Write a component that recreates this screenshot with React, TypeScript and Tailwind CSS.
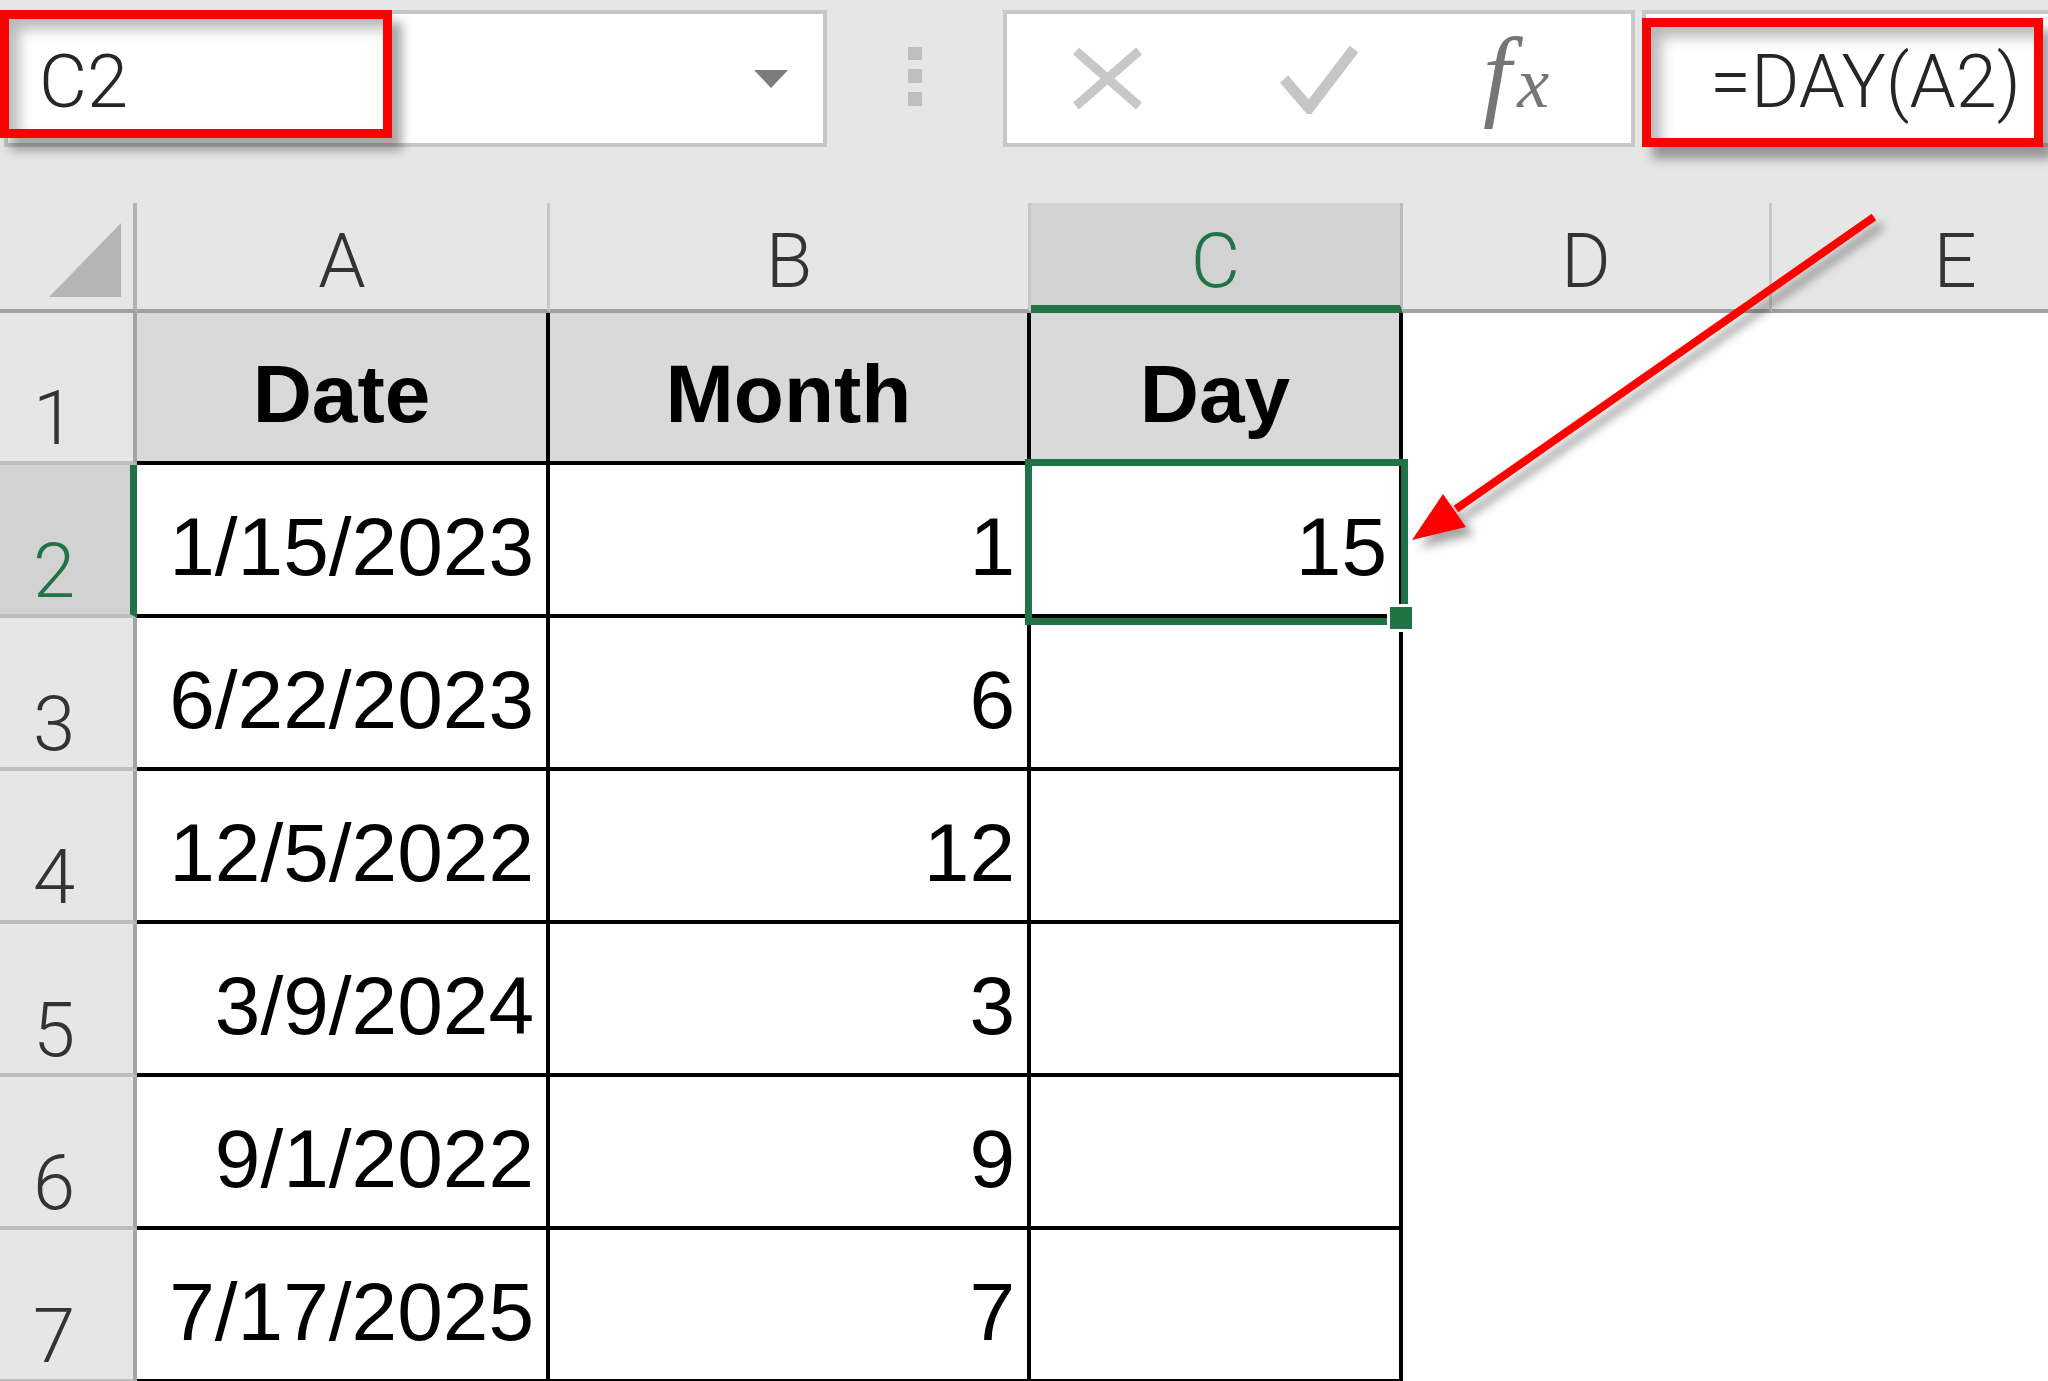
import React from "react";

type Row = { n: number; cells: [string, string, string] };

const ROWS: Row[] = [
  { n: 2, cells: ["1/15/2023", "1", "15"] },
  { n: 3, cells: ["6/22/2023", "6", ""] },
  { n: 4, cells: ["12/5/2022", "12", ""] },
  { n: 5, cells: ["3/9/2024", "3", ""] },
  { n: 6, cells: ["9/1/2022", "9", ""] },
  { n: 7, cells: ["7/17/2025", "7", ""] },
];

const COL_LETTERS = ["A", "B", "C", "D", "E"];

function RowHeader({ n }: { n: number }) {
  const selected = n === 2;
  return (
    <div
      className={
        selected
          ? "flex items-end border-b-[4px] border-r-[7px] border-b-[#bdbdbd] border-r-[#217346] bg-[#d2d2d2] pb-[5px] pl-[33px] text-[76px] font-light leading-none text-[#217346]"
          : "flex items-end border-b-[4px] border-r-[4px] border-b-[#bdbdbd] border-r-[#a3a3a3] bg-[#e6e6e6] pb-[5px] pl-[33px] text-[76px] font-light leading-none text-[#333333]"
      }
    >
      {n}
    </div>
  );
}

export default function App() {
  return (
    <div className="relative h-[1381px] w-[2048px] overflow-hidden bg-[#e6e6e6] font-['Roboto',sans-serif]">
      {/* formula bar */}
      <div className="flex h-[203px] items-start pt-[10px]">
        <div className="ml-[4px] flex h-[137px] w-[823px] shrink-0 items-center justify-between border-[4px] border-[#c6c6c6] bg-white pl-[31px] pr-[35px]">
          <span className="mt-[7px] text-[74px] font-light leading-none text-[#262626]">C2</span>
          <svg width="34" height="18" viewBox="0 0 34 18">
            <polygon points="0,0 34,0 17,18" fill="#7b7b7b" />
          </svg>
        </div>

        <div className="ml-[81px] mt-[37px] flex shrink-0 flex-col gap-[9px]">
          <div className="h-[13px] w-[14px] bg-[#bfbfbf]" />
          <div className="h-[14px] w-[14px] bg-[#bfbfbf]" />
          <div className="h-[14px] w-[14px] bg-[#bfbfbf]" />
        </div>

        <div className="ml-[81px] flex h-[137px] w-[632px] shrink-0 items-center border-[4px] border-[#c8c8c8] bg-white">
          <svg className="ml-[65px] shrink-0" width="71" height="63" viewBox="0 0 71 63">
            <line x1="4" y1="4" x2="67" y2="59" stroke="#c8c8c8" strokeWidth="9" />
            <line x1="67" y1="4" x2="4" y2="59" stroke="#c8c8c8" strokeWidth="9" />
          </svg>
          <svg className="ml-[137px] shrink-0" width="78" height="70" viewBox="0 0 78 70">
            <polyline points="4,35 29,64 74,5" fill="none" stroke="#c6c6c6" strokeWidth="11" />
          </svg>
          <div className="-mt-[12px] ml-[125px] flex items-baseline font-['Liberation_Serif',serif] italic text-[#767676]">
            <span className="text-[102px] leading-none">f</span>
            <span className="ml-[6px] text-[72px] leading-none">x</span>
          </div>
        </div>

        <div className="ml-[7px] flex h-[137px] flex-1 items-center border-[4px] border-r-0 border-[#c8c8c8] bg-white pl-[64px]">
          <span className="mt-[7px] whitespace-nowrap text-[74px] font-light leading-none text-[#262626]">=DAY(A2)</span>
        </div>
      </div>

      {/* column headers */}
      <div className="grid h-[110px] w-[2141px] grid-cols-[137px_413px_481px_372px_369px_369px]">
        <div className="flex items-end justify-end border-b-[4px] border-r-[4px] border-b-[#a0a0a0] border-r-[#b1b1b1] pb-[12px] pr-[12px]">
          <svg width="72" height="74" viewBox="0 0 72 74">
            <polygon points="72,0 72,74 0,74" fill="#b5b5b5" />
          </svg>
        </div>
        {COL_LETTERS.map((c) =>
          c === "C" ? (
            <div
              key={c}
              className="flex items-end justify-center border-b-[8px] border-r-[3px] border-b-[#217346] border-r-[#bcbcbc] bg-[#d2d2d2] pb-[6px] text-[76px] font-light leading-none text-[#217346]"
            >
              {c}
            </div>
          ) : (
            <div
              key={c}
              className="flex items-end justify-center border-b-[4px] border-r-[3px] border-b-[#a0a0a0] border-r-[#c8c8c8] pb-[10px] text-[76px] font-light leading-none text-[#333333]"
            >
              {c}
            </div>
          )
        )}
      </div>

      {/* row 1: table header */}
      <div className="grid h-[152px] w-[2141px] grid-cols-[137px_413px_481px_372px_369px_369px]">
        <RowHeader n={1} />
        {["Date", "Month", "Day"].map((h) => (
          <div
            key={h}
            className="flex items-end justify-center border-b-[4px] border-r-[4px] border-black bg-[#d9d9d9] pb-[26px] font-['Liberation_Sans',Arial,sans-serif] text-[82px] font-bold leading-none text-black"
          >
            {h}
          </div>
        ))}
        <div className="bg-white" />
        <div className="bg-white" />
      </div>

      {/* data rows */}
      {ROWS.map((r) => (
        <div key={r.n} className="grid h-[153px] w-[2141px] grid-cols-[137px_413px_481px_372px_369px_369px]">
          <RowHeader n={r.n} />
          {r.cells.map((v, i) => (
            <div
              key={i}
              className="flex items-end justify-end border-b-[4px] border-r-[4px] border-black bg-white pb-[26px] pr-[12px] font-['Liberation_Sans',Arial,sans-serif] text-[82px] leading-none text-black"
            >
              {v}
            </div>
          ))}
          <div className="bg-white" />
          <div className="bg-white" />
        </div>
      ))}

      {/* active cell C2 */}
      <div className="absolute left-[1025px] top-[459px] h-[166px] w-[383px] border-[7px] border-[#217346]" />
      <div className="absolute left-[1387px] top-[604px] h-[28px] w-[28px] border-[3px] border-white bg-[#217346]" />

      {/* callout boxes */}
      <div className="absolute left-0 top-[10px] h-[128px] w-[392px] border-[9px] border-[#ff0000] shadow-[10px_12px_10px_rgba(0,0,0,0.35),inset_10px_10px_14px_rgba(0,0,0,0.28)]" />
      <div className="absolute left-[1642px] top-[18px] h-[129px] w-[401px] border-[9px] border-[#ff0000] shadow-[10px_12px_10px_rgba(0,0,0,0.35),inset_10px_10px_14px_rgba(0,0,0,0.28)]" />

      {/* arrow */}
      <svg
        className="pointer-events-none absolute left-[1390px] top-[195px] overflow-visible"
        width="500"
        height="365"
        viewBox="0 0 500 365"
      >
        <defs>
          <filter id="arrowShadow" x="-20%" y="-20%" width="150%" height="150%">
            <feDropShadow dx="8" dy="8" stdDeviation="5" floodColor="#000" floodOpacity="0.35" />
          </filter>
        </defs>
        <g filter="url(#arrowShadow)">
          <line x1="484" y1="22" x2="66" y2="314" stroke="#ff0000" strokeWidth="8" />
          <polygon points="22,345 53,299 76,332" fill="#ff0000" />
        </g>
      </svg>
    </div>
  );
}
